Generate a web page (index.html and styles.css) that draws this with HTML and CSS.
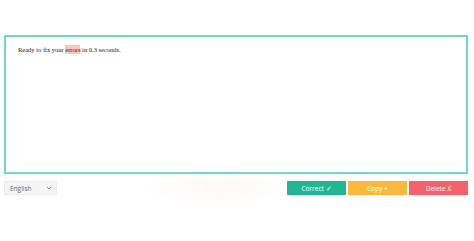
FILE: index.html
```html
<!DOCTYPE html>
<html>
<head>
<meta charset="utf-8">
<link rel="stylesheet" href="styles.css">
</head>
<body>
<div class="page">
  <div class="editor">
    <p class="text">Ready to fix your <span class="err">errors</span> in 0.3 seconds.</p>
  </div>
  <div class="toolbar">
    <div class="select">
      <span>English</span>
      <svg width="6" height="4" viewBox="0 0 6 4"><path d="M1 1 L3 3 L5 1" fill="none" stroke="#888" stroke-width="1"/></svg>
    </div>
    <div class="buttons">
      <button class="btn correct">Correct ✓</button>
      <button class="btn copy">Copy +</button>
      <button class="btn delete">Delete X</button>
    </div>
  </div>
</div>
</body>
</html>
```
FILE: styles.css
```css
html, body {
  margin: 0;
  padding: 0;
  background: #ffffff;
}
.page {
  width: 474px;
  height: 241px;
  padding: 35px 6px 0 4px;
  box-sizing: border-box;
  background: radial-gradient(ellipse 80px 16px at 220px 188px, #fff8f5 0%, rgba(255,255,255,0) 100%);
}
.editor {
  height: 139px;
  border: 2px solid #72dac1;
  box-sizing: border-box;
  padding: 8px 12px;
}
.text {
  margin: 0;
  font-family: "Liberation Serif", serif;
  font-size: 6.5px;
  line-height: 10px;
  color: #222;
}
.err {
  background: #f9c7c2;
  padding: 1px 0;
}
.toolbar {
  display: flex;
  justify-content: space-between;
  align-items: center;
  margin-top: 7px;
}
.select {
  width: 53px;
  height: 14px;
  box-sizing: border-box;
  background: #f4f4f4;
  border: 1px solid #ececec;
  display: flex;
  align-items: center;
  justify-content: space-between;
  padding: 0 4px 0 5px;
  font-family: "Open Sans", sans-serif;
  font-size: 6.5px;
  color: #666;
}
.buttons {
  display: flex;
  gap: 2px;
}
.btn {
  width: 59px;
  height: 14px;
  border: none;
  padding: 0;
  margin: 0;
  font-family: "Open Sans", sans-serif;
  font-size: 6.5px;
  color: #ffffff;
  display: flex;
  align-items: center;
  justify-content: center;
}
.correct { background: #21b795; }
.copy { background: #fbb93b; }
.delete { background: #f6626b; }
```
